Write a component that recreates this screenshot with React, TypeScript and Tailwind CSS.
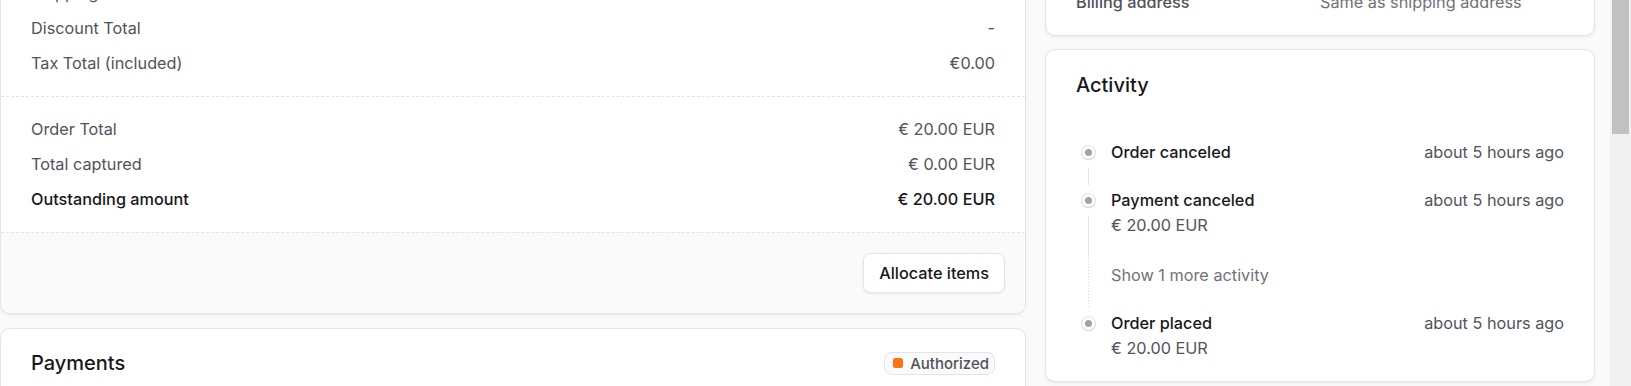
import React from "react"

const card =
  "shrink-0 bg-white border border-[#e4e4e7] rounded-[10px] shadow-[0_1px_2px_-1px_rgba(0,0,0,0.08),0_2px_4px_0_rgba(0,0,0,0.04)] overflow-hidden"

function Row({ label, value, strong }: { label: string; value: string; strong?: boolean }) {
  return (
    <div className="flex h-[25px] items-center justify-between">
      <span className={strong ? "font-[450] text-[#18181b]" : "text-[#52525b]"}>{label}</span>
      <span className={strong ? "font-[450] text-[#18181b]" : "text-[#52525b]"}>{value}</span>
    </div>
  )
}

function Dot() {
  return (
    <div className="flex size-[25px] shrink-0 items-center justify-center">
      <div className="flex size-[12.5px] items-center justify-center rounded-full bg-white shadow-[0_0_0_1px_rgba(0,0,0,0.1),0_1px_2px_0_rgba(0,0,0,0.12)]">
        <div className="size-[7px] rounded-full bg-[#a1a1aa]" />
      </div>
    </div>
  )
}

function ActivityItem({
  title,
  time,
  sub,
  line,
  pad,
}: {
  title: string
  time: string
  sub?: string
  line?: string
  pad?: string
}) {
  return (
    <div className="grid grid-cols-[25px_1fr] gap-x-[10px]">
      <div className="flex flex-col items-center">
        <Dot />
        {line && <div className={line} />}
      </div>
      <div className={pad}>
        <div className="flex h-[25px] items-center justify-between">
          <span className="font-[450] text-[#18181b]">{title}</span>
          <span className="text-[#52525b]">{time}</span>
        </div>
        {sub && <div className="h-[25px] text-[#52525b]">{sub}</div>}
      </div>
    </div>
  )
}

export default function App() {
  return (
    <div className="flex h-[386px] w-[1631px] overflow-hidden bg-[#fafafa] text-[16.25px] leading-[25px] [font-family:Inter,sans-serif]">
      <div className="flex min-w-0 flex-1 gap-[19px] pr-[15px]">
        {/* Left column */}
        <div className="-mt-[75px] flex min-w-0 flex-1 flex-col gap-[14px]">
          <div className={card}>
            <div className="flex flex-col gap-[10px] px-[30px] py-5">
              <Row label="Subtotal" value="€20.00" />
              <Row label="Shipping Total" value="€0.00" />
              <Row label="Discount Total" value="-" />
              <Row label="Tax Total (included)" value="€0.00" />
            </div>
            <div className="flex flex-col gap-[10px] border-t border-dashed border-[#e4e4e7] px-[30px] py-5">
              <Row label="Order Total" value="€ 20.00 EUR" />
              <Row label="Total captured" value="€ 0.00 EUR" />
              <Row label="Outstanding amount" value="€ 20.00 EUR" strong />
            </div>
            <div className="flex justify-end border-t border-dashed border-[#e4e4e7] bg-[#fafafa] p-5">
              <button className="h-[40px] rounded-[7.5px] border border-[#e4e4e7] bg-white px-[15px] font-[450] text-[#18181b] shadow-[0_1px_2px_0_rgba(0,0,0,0.08)]">
                Allocate items
              </button>
            </div>
          </div>

          <div className={card}>
            <div className="flex h-[79px] items-start justify-between px-[30px] pt-[19px]">
              <h2 className="text-[20px] leading-[30px] font-[450] text-[#18181b]">Payments</h2>
              <div className="mt-[3.5px] flex items-center rounded-[7.5px] border border-[#e4e4e7] bg-[#fafafa] pr-[5px] text-[15px] leading-none font-[450] text-[#52525b]">
                <div className="flex h-[21px] w-[25px] items-center justify-center">
                  <div className="size-[10px] rounded-[2.5px] bg-[#f97316]" />
                </div>
                Authorized
              </div>
            </div>
            <div className="border-t border-dashed border-[#e4e4e7] px-[30px] py-5">
              <Row label="pay_01" value="€ 20.00 EUR" />
            </div>
          </div>
        </div>

        {/* Right column */}
        <div className="-mt-[31px] flex w-[550px] shrink-0 flex-col gap-[13px]">
          <div className={card}>
            <div className="grid grid-cols-2 items-start px-[30px] py-5">
              <span className="font-[450] text-[#52525b]">Billing address</span>
              <span className="text-[#71717a]">Same as shipping address</span>
            </div>
          </div>

          <div className={card}>
            <div className="px-[30px] py-5">
              <h2 className="text-[20px] leading-[30px] font-[450] text-[#18181b]">Activity</h2>
            </div>
            <div className="flex flex-col px-[30px] pt-5 pb-5">
              <ActivityItem
                title="Order canceled"
                time="about 5 hours ago"
                line="mt-[2.5px] mb-[3px] w-px flex-1 bg-[#e4e4e7]"
                pad="pb-[23px]"
              />
              <ActivityItem
                title="Payment canceled"
                time="about 5 hours ago"
                sub="€ 20.00 EUR"
                line="mt-[2.5px] mb-px w-px flex-1 bg-[#e4e4e7]"
                pad="pb-5"
              />
              <div className="grid h-[53px] grid-cols-[25px_1fr] gap-x-[10px]">
                <div className="flex justify-center">
                  <div className="h-[51px] w-px bg-[linear-gradient(#d4d4d8_34%,rgba(255,255,255,0)_0%)] bg-[length:1px_3px] bg-repeat-y" />
                </div>
                <div className="pt-[5px]">
                  <button className="h-[25px] text-[#71717a]">Show 1 more activity</button>
                </div>
              </div>
              <ActivityItem title="Order placed" time="about 5 hours ago" sub="€ 20.00 EUR" />
            </div>
          </div>
        </div>
      </div>

      {/* Scrollbar */}
      <div className="w-[21px] shrink-0 bg-[#f1f1f1] px-[2px]">
        <div className="h-[134px] bg-[#c1c1c1]" />
      </div>
    </div>
  )
}
